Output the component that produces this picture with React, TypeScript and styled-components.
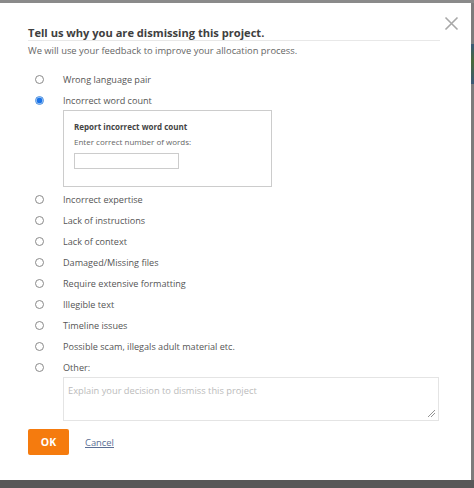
import React from "react";
import styled, { createGlobalStyle } from "styled-components";

const Global = createGlobalStyle`
  html, body { margin: 0; padding: 0; background: #585858; }
  body { font-family: "Open Sans", "Liberation Sans", sans-serif; overflow: hidden; }
`;

const Page = styled.div`
  width: 474px;
  height: 488px;
  display: flex;
  padding-top: 3px;
  box-sizing: border-box;
  background: linear-gradient(#8a8a8a, #8a8a8a) top / 100% 3px no-repeat, #585858;
`;

const SideStrip = styled.div`
  width: 3px;
  height: 477px;
  background: linear-gradient(to bottom, #7c7c7c 0, #7c7c7c 41px, #3b5a78 41px, #4a6a3a 58px, #3b5878 81px, #7c7c7c 81px);
`;

const Modal = styled.div`
  position: relative;
  width: 471px;
  height: 477px;
  background: #fff;
  box-sizing: border-box;
  padding: 22px 31px 0 28px;
  color: #555;
`;

const Close = styled.div`
  position: absolute;
  right: 12px;
  top: 11px;
  width: 15px;
  height: 15px;
`;

const Title = styled.h2`
  margin: 0;
  font-size: 11.1px;
  font-weight: 700;
  color: #404040;
  line-height: 15px;
  border-bottom: 1px solid #e8e8e8;
`;

const Sub = styled.p`
  margin: 2px 0 10px;
  font-size: 9.4px;
  color: #666;
  line-height: 16px;
`;

const Options = styled.div`
  display: flex;
  flex-direction: column;
`;

const Row = styled.label`
  display: flex;
  align-items: center;
  height: 21px;
  font-size: 9.1px;
  color: #555;
`;

const RadioDot = styled.span<{ $checked?: boolean }>`
  width: 9px;
  height: 9px;
  margin-left: 7px;
  margin-right: 19px;
  border-radius: 50%;
  box-sizing: border-box;
  border: 1px solid ${(p) => (p.$checked ? "#4a90e2" : "#8a8a8a")};
  background: ${(p) => (p.$checked ? "radial-gradient(circle, #1a73e8 0 2.6px, #bcd6f5 3.2px)" : "#fff")};
`;

const Nested = styled.div`
  margin: -1px 0 2px 35px;
  width: 209px;
  height: 77px;
  box-sizing: border-box;
  border: 1px solid #ccc;
  padding: 9px 10px;
  display: flex;
  flex-direction: column;
`;

const NestedTitle = styled.div`
  font-size: 8px;
  font-weight: 700;
  color: #444;
  line-height: 14px;
`;

const NestedLabel = styled.div`
  font-size: 8px;
  color: #666;
  line-height: 16px;
`;

const NumberInput = styled.div`
  width: 105px;
  height: 16px;
  margin-top: 3px;
  box-sizing: border-box;
  border: 1px solid #ccc;
`;

const TextArea = styled.div`
  position: relative;
  margin: -1px 0 8px 35px;
  width: 376px;
  height: 44px;
  box-sizing: border-box;
  border: 1px solid #e4e4e4;
  padding: 6px 4px;
  font-size: 9.3px;
  color: #bbb;
`;

const Grip = styled.svg`
  position: absolute;
  right: 2px;
  bottom: 2px;
`;

const Actions = styled.div`
  display: flex;
  align-items: center;
  gap: 16px;
`;

const OkButton = styled.button`
  width: 41px;
  height: 26px;
  border: 0;
  border-radius: 2px;
  background: #f57b0e;
  color: #fff;
  font-family: inherit;
  font-weight: 700;
  font-size: 10.5px;
  padding: 0;
`;

const Cancel = styled.a`
  font-size: 9.4px;
  color: #5b6f95;
  text-decoration: underline;
`;

const reasons = [
  "Incorrect expertise",
  "Lack of instructions",
  "Lack of context",
  "Damaged/Missing files",
  "Require extensive formatting",
  "Illegible text",
  "Timeline issues",
  "Possible scam, illegals adult material etc.",
];

export default function App() {
  return (
    <Page>
      <Global />
      <Modal>
        <Close>
          <svg width="15" height="15" viewBox="0 0 15 15">
            <path d="M1.5 1.5 L13.5 13.5 M13.5 1.5 L1.5 13.5" stroke="#a8a8a8" strokeWidth="1.6" />
          </svg>
        </Close>
        <Title>Tell us why you are dismissing this project.</Title>
        <Sub>We will use your feedback to improve your allocation process.</Sub>
        <Options>
          <Row>
            <RadioDot />
            Wrong language pair
          </Row>
          <Row>
            <RadioDot $checked />
            Incorrect word count
          </Row>
          <Nested>
            <NestedTitle>Report incorrect word count</NestedTitle>
            <NestedLabel>Enter correct number of words:</NestedLabel>
            <NumberInput />
          </Nested>
          {reasons.map((r) => (
            <Row key={r}>
              <RadioDot />
              {r}
            </Row>
          ))}
          <Row>
            <RadioDot />
            Other:
          </Row>
          <TextArea>
            Explain your decision to dismiss this project
            <Grip width="9" height="9" viewBox="0 0 9 9">
              <path d="M1 8 L8 1 M4 8 L8 4" stroke="#888" strokeWidth="0.9" />
            </Grip>
          </TextArea>
        </Options>
        <Actions>
          <OkButton>OK</OkButton>
          <Cancel>Cancel</Cancel>
        </Actions>
      </Modal>
      <SideStrip />
    </Page>
  );
}
